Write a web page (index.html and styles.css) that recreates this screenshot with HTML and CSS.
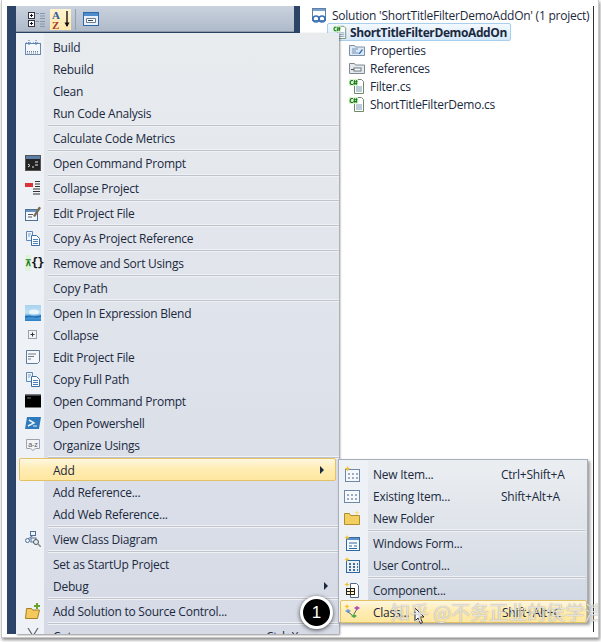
FILE: index.html
```html
<!DOCTYPE html>
<html lang="en">
<head>
<meta charset="utf-8">
<title>Solution context menu</title>
<link rel="stylesheet" href="styles.css">
</head>
<body>
<svg class="defs" width="0" height="0" aria-hidden="true">
  <symbol id="cs" viewBox="0 0 16 16">
    <path d="M5.500 1.500h7l2 2v12h-9z" fill="#fff" stroke="#6d8a6d"/>
    <path d="M7 9h6M7 11h6M7 13h6" stroke="#7c9ab8"/>
    <rect x="0" y="1" width="9" height="7" fill="#d9f5d0"/>
    <path d="M4 2.500H2.200L1.200 4v1.500l1 1H4" fill="none" stroke="#1c7a1c" stroke-width="1.200"/>
    <path d="M5.700 2l-.6 5M7.700 2l-.6 5M4.500 3.700h4M4.300 5.500h4" stroke="#1c7a1c"/>
  </symbol>
  <symbol id="copy" viewBox="0 0 16 16">
    <path d="M1.500 1.500h6v9h-6z" fill="#eef4fb" stroke="#5f87b4"/>
    <path d="M6.500 5.500h5l3 3v7h-8z" fill="#fff" stroke="#3d6ea8"/>
    <path d="M8 9.500h5M8 11.500h5M8 13.500h5" stroke="#4a7fbb"/>
    <path d="M3 4h3M3 6h2" stroke="#7d9fc6"/>
  </symbol>
  <symbol id="cmd" viewBox="0 0 16 16">
    <rect x=".5" y=".5" width="15" height="15" fill="#222" stroke="#555"/>
    <rect x="1" y="1" width="14" height="3" fill="#5b7fa8"/>
    <path d="M3 9l2 1.500L3 12M7 12h2M10 7h3M10 10h3" stroke="#e8e8e8" fill="none"/>
  </symbol>
  <symbol id="new" viewBox="0 0 16 16">
    <rect x="1.500" y="3.500" width="14" height="12" fill="#f5f8fc" stroke="#6f88a8"/>
    <path d="M4 8h2M8 8h2M12 8h2M4 12h2M8 12h2M12 12h2" stroke="#4b6079"/>
    <path d="M3.500 0l1 2 2 .5-2 1-1 2-1-2-2-1 2-.5z" fill="#f2c230"/>
  </symbol>
</svg>
<div class="window">
  <div class="panes">
    <div class="left-pane">
      <div class="toolbar">
        <span class="tool">
          <svg width="18" height="16" viewBox="0 0 18 16"><rect x=".5" y="1.500" width="6" height="6" fill="#fff" stroke="#334"/><path d="M2 4.500h3M3.500 3v3" stroke="#112"/><rect x=".5" y="9.500" width="6" height="6" fill="#fff" stroke="#334"/><path d="M2 12.500h3M3.500 11v3" stroke="#112"/><path d="M8 2.500h3M12 2.500h5M12 5h5M12 7.500h5M8 10.500h3M12 10.500h5M12 13h5M12 15.500h5" stroke="#8896a8"/></svg>
        </span>
        <span class="tool tool-on">
          <svg width="16" height="18" viewBox="0 0 16 18"><path d="M12 1v15" stroke="#111" stroke-width="1.400"/><path d="M9.500 12.500L12 17l2.500-4.500z" fill="#111"/></svg>
          <span class="az"><span class="az-a">A</span><br><span class="az-z">Z</span></span>
        </span>
        <span class="tool-sep"></span>
        <span class="tool">
          <svg width="16" height="16" viewBox="0 0 16 16"><rect x=".5" y="1.500" width="15" height="13" fill="#e8f1fb" stroke="#2f69a8"/><rect x="1" y="2" width="14" height="3" fill="#4f8ccb"/><path d="M3.500 7.500h9v4h-9z" fill="#fff" stroke="#6b7d92"/><path d="M5 9.500h5" stroke="#345"/></svg>
        </span>
      </div>
    </div>
    <div class="explorer">
      <div class="tree-row">
        <svg class="tree-icon" width="17" height="17" viewBox="0 0 17 17"><rect x="1.500" y="1.500" width="13" height="12" fill="#fff" stroke="#5d7fa8"/><rect x="2" y="2" width="12" height="2" fill="#7aa1cb"/><circle cx="5" cy="12" r="3" fill="none" stroke="#3a6fb5" stroke-width="1.600"/><circle cx="11" cy="12" r="3" fill="none" stroke="#3a6fb5" stroke-width="1.600"/></svg>
        <span>Solution 'ShortTitleFilterDemoAddOn' (1 project)</span>
      </div>
      <div class="tree-row tree-project">
        <span class="twist"></span>
        <span class="project-box">
          <svg width="14" height="14"><use href="#cs"/></svg>
          <span class="project-name">ShortTitleFilterDemoAddOn</span>
        </span>
      </div>
      <div class="tree-children">
        <div class="tree-child">
          <svg width="16" height="16" viewBox="0 0 16 16"><path d="M.5 3.500h5l1 1.500h9v8.500H.5z" fill="#dfe9f5" stroke="#7a8ea6"/><path d="M3 7h6M3 9h4M3 11h6" stroke="#6f8fb5"/><path d="M9 12l4-5 1 1-3 4z" fill="#3a78c0"/></svg>
          <span>Properties</span>
        </div>
        <div class="tree-child">
          <svg width="16" height="16" viewBox="0 0 16 16"><path d="M.5 3.500h5l1 1.500h9v8.500H.5z" fill="#e5e8ec" stroke="#7e8894"/><rect x="5" y="8" width="7" height="3" fill="#fff" stroke="#6b7682"/><path d="M2 9.500h3" stroke="#4b5763"/></svg>
          <span>References</span>
        </div>
        <div class="tree-child"><svg width="16" height="16"><use href="#cs"/></svg><span>Filter.cs</span></div>
        <div class="tree-child"><svg width="16" height="16"><use href="#cs"/></svg><span>ShortTitleFilterDemo.cs</span></div>
      </div>
    </div>
  </div>

  <div class="menu main-menu">
    <div class="item"><svg class="ico" width="16" height="16" viewBox="0 0 16 16"><rect x=".5" y="4.500" width="15" height="11" fill="#f3f6fa" stroke="#6b89ad"/><path d="M2 12.500h12M2 14h12" stroke="#66809c" stroke-dasharray="1 1"/><path d="M4 1v6M1 4h6M11 1v6M8 4h6" stroke="#3f77b6" stroke-dasharray="1 1"/></svg><span>Build</span></div>
    <div class="item"><span>Rebuild</span></div>
    <div class="item"><span>Clean</span></div>
    <div class="item"><span>Run Code Analysis</span></div>
    <div class="sep"></div>
    <div class="item"><span>Calculate Code Metrics</span></div>
    <div class="sep"></div>
    <div class="item"><svg class="ico" width="16" height="16"><use href="#cmd"/></svg><span>Open Command Prompt</span></div>
    <div class="sep"></div>
    <div class="item"><svg class="ico" width="16" height="16" viewBox="0 0 16 16"><rect x="0" y="3" width="8" height="4" fill="#d9343a"/><path d="M10 1.500h5M10 4h5M10 6.500h5M8 9h7M8 11.500h7M8 14h7" stroke="#333"/></svg><span>Collapse Project</span></div>
    <div class="sep"></div>
    <div class="item"><svg class="ico" width="16" height="16" viewBox="0 0 16 16"><rect x=".5" y="4.500" width="12" height="11" fill="#f4f7fb" stroke="#4d7099"/><rect x="1" y="5" width="11" height="2" fill="#6d94c0"/><path d="M3 9.500h5M3 12h4" stroke="#556"/><path d="M8 11L14 1.500l2 1.500-6 9z" fill="#7a6a50"/></svg><span>Edit Project File</span></div>
    <div class="sep"></div>
    <div class="item"><svg class="ico" width="16" height="16"><use href="#copy"/></svg><span>Copy As Project Reference</span></div>
    <div class="sep"></div>
    <div class="item"><span class="ico braces"><b class="sort">⊼</b><b>{}</b></span><span>Remove and Sort Usings</span></div>
    <div class="sep"></div>
    <div class="item"><span>Copy Path</span></div>
    <div class="sep"></div>
    <div class="item"><svg class="ico" width="16" height="16" viewBox="0 0 16 16"><defs><linearGradient id="blend" x1="0" y1="0" x2="0" y2="1"><stop offset="0" stop-color="#a9d2ee"/><stop offset=".5" stop-color="#bfe2f4"/><stop offset=".7" stop-color="#5fa6dc"/><stop offset="1" stop-color="#2a7fc6"/></linearGradient></defs><rect width="16" height="16" fill="url(#blend)"/><ellipse cx="9" cy="7" rx="5" ry="2.500" fill="#eaf6fc"/><path d="M0 11c5-2 8 2 16-1v2c-6 2-10-1-16 1z" fill="#1f6fb8"/></svg><span>Open In Expression Blend</span></div>
    <div class="item"><svg class="ico" width="16" height="16" viewBox="0 0 16 16"><rect x="3.500" y="3.500" width="8" height="8" fill="#f2f4f7" stroke="#98a2ae"/><path d="M5.500 7.500h4M7.500 5.500v4" stroke="#333"/></svg><span>Collapse</span></div>
    <div class="item"><svg class="ico" width="16" height="16" viewBox="0 0 16 16"><path d="M1.500 1.500h13v11l-2 2h-11z" fill="#f5f7fa" stroke="#5f7c9e"/><path d="M3 5h8M3 7.500h6M3 10h3" stroke="#6a7b8e"/></svg><span>Edit Project File</span></div>
    <div class="item"><svg class="ico" width="16" height="16"><use href="#copy"/></svg><span>Copy Full Path</span></div>
    <div class="item"><svg class="ico" width="16" height="16" viewBox="0 0 16 16"><rect width="16" height="13" y="1.500" fill="#000"/><rect y="1.500" width="16" height="1" fill="#778"/><path d="M2 5h4" stroke="#777"/></svg><span>Open Command Prompt</span></div>
    <div class="item"><svg class="ico" width="16" height="16" viewBox="0 0 16 16"><path d="M2 2h14l-2 12H0z" fill="#2f79bd"/><path d="M4 5l5 3-6 3" fill="none" stroke="#e8f2fb" stroke-width="1.500"/><path d="M8 11h4" stroke="#e8f2fb"/></svg><span>Open Powershell</span></div>
    <div class="item"><svg class="ico" width="16" height="16" viewBox="0 0 16 16"><path d="M1.500 2.500h13v9h-4l-2.500 2-2.500-2h-4z" fill="#f2f4f7" stroke="#9aa4b0"/><text x="8" y="9.500" class="az-mini">a-z</text></svg><span>Organize Usings</span></div>
    <div class="sep"></div>
    <div class="item item-on"><span>Add</span><i class="arrow"></i></div>
    <div class="item"><span>Add Reference...</span></div>
    <div class="item"><span>Add Web Reference...</span></div>
    <div class="sep"></div>
    <div class="item"><svg class="ico" width="16" height="16" viewBox="0 0 16 16"><rect x="5.500" y=".5" width="5" height="4" fill="#eef3f8" stroke="#4e6f96"/><circle cx="2.500" cy="9.500" r="2" fill="#eef3f8" stroke="#4e6f96"/><rect x="6" y="7" width="5" height="4" fill="#eef3f8" stroke="#4e6f96"/><path d="M8 4.500L3 8" stroke="#4e6f96"/><circle cx="11" cy="11" r="2.500" fill="#dcebf7" stroke="#555"/><path d="M13 13l3 3" stroke="#888" stroke-width="1.500"/></svg><span>View Class Diagram</span></div>
    <div class="sep"></div>
    <div class="item"><span>Set as StartUp Project</span></div>
    <div class="item"><span>Debug</span><i class="arrow"></i></div>
    <div class="sep"></div>
    <div class="item"><svg class="ico" width="16" height="16" viewBox="0 0 16 16"><path d="M.5 15.500l1-10h5l1 1.500h7l-2 8.500z" fill="#f3c95c" stroke="#a67f25"/><path d="M12 0v6M9 3h6" stroke="#6aa42b" stroke-width="2"/></svg><span>Add Solution to Source Control...</span></div>
    <div class="sep"></div>
    <div class="item"><svg class="ico" width="16" height="16" viewBox="0 0 16 16"><path d="M3 0l5 8 5-8M5 16l3-8 3 8" fill="none" stroke="#667" stroke-width="1.200"/></svg><span>Cut</span><span class="keys">Ctrl+X</span></div>
  </div>

  <div class="menu sub-menu">
    <div class="item"><svg class="ico" width="16" height="16"><use href="#new"/></svg><span>New Item...</span><span class="keys">Ctrl+Shift+A</span></div>
    <div class="item"><svg class="ico" width="16" height="16" viewBox="0 0 16 16"><rect x=".5" y="2.500" width="15" height="12" fill="#f5f8fc" stroke="#6f88a8"/><path d="M3 7h2M7 7h2M11 7h2M3 11h2M7 11h2M11 11h2" stroke="#4b6079"/></svg><span>Existing Item...</span><span class="keys">Shift+Alt+A</span></div>
    <div class="item"><svg class="ico" width="16" height="16" viewBox="0 0 16 16"><path d="M.5 3.500h5l1 2h9v9H.5z" fill="#f3cf62" stroke="#b08d2f"/><path d="M13 0l.7 2 2 .5-2 1-.7 2-.7-2-2-1 2-.5z" fill="#f7e27c"/></svg><span>New Folder</span></div>
    <div class="sep"></div>
    <div class="item"><svg class="ico" width="16" height="16" viewBox="0 0 16 16"><rect x="2.500" y="2.500" width="13" height="13" fill="#f5f8fc" stroke="#31689f"/><rect x="3" y="3" width="12" height="2" fill="#5b90c7"/><path d="M5 8h8M5 11h3M10 11h3M5 13.500h8" stroke="#31689f"/><path d="M3 0l.8 1.800 2 .5-2 .9-.8 1.900-.8-1.900-2-.9 2-.5z" fill="#f2c230"/></svg><span>Windows Form...</span></div>
    <div class="item"><svg class="ico" width="16" height="16" viewBox="0 0 16 16"><rect x="2.500" y="3.500" width="13" height="12" fill="#e9f0f8" stroke="#31689f"/><path d="M5 7h2M9 7h2M13 7h1M5 10h2M9 10h2M13 10h1M5 13h2M9 13h2M13 13h1" stroke="#17406e" stroke-width="1.500"/><path d="M3 0l.8 1.800 2 .5-2 .9-.8 1.900-.8-1.900-2-.9 2-.5z" fill="#f2c230"/></svg><span>User Control...</span></div>
    <div class="sep"></div>
    <div class="item"><svg class="ico" width="16" height="16" viewBox="0 0 16 16"><path d="M6.500 1.500h6l2 2v12h-8z" fill="#fff" stroke="#4d6a8c"/><rect x="2.500" y="6.500" width="8" height="6" fill="#fff5c8" stroke="#222"/><path d="M6.500 6.500v6M2.500 9.500h8" stroke="#222"/><path d="M3 0l.8 1.800 2 .5-2 .9-.8 1.900-.8-1.900-2-.9 2-.5z" fill="#f2c230"/></svg><span>Component...</span></div>
    <div class="item item-on"><svg class="ico" width="16" height="16" viewBox="0 0 16 16"><path d="M3 0l.8 1.800 2 .5-2 .9-.8 1.900-.8-1.900-2-.9 2-.5z" fill="#f2c230"/><path d="M1 7l3-2 3 2-3 2z" fill="#6f9fd0"/><path d="M10 4l3-2 3 2-3 2z" fill="#b24fb8"/><path d="M7 12l3-2 3 2-3 2z" fill="#4fa84f"/><path d="M4 8l4 3M13 5l-3 5" stroke="#567"/></svg><span>Class...</span><span class="keys">Shift+Alt+C</span></div>
  </div>

  <div class="badge">1</div>
  <svg class="cursor" width="12" height="18" viewBox="0 0 12 18"><path d="M1 1v13l3-3 2.500 5.500 2-1L6 10h4z" fill="#fff" stroke="#222"/></svg>
  <div class="watermark">知乎 @不务正业的侯学浩</div>
</div>
</body>
</html>
```
FILE: styles.css
```css
* { box-sizing: border-box; }
html, body { margin: 0; padding: 0; }
body { width: 601px; height: 642px; overflow: hidden; background: #fff; font-family: "Open Sans", "Noto Sans", sans-serif; font-size: 12px; letter-spacing: -.24px; color: #1b293e; }
.defs { display: block; height: 0; }
.window { position: relative; width: 598px; height: 638px; margin-left: 1px; overflow: hidden; background: #fff; padding: 6px 4px 3px 5px; border: 1px solid #c8c8c8; border-top: 0; box-shadow: 1px 2px 3px rgba(0,0,0,.45); }
.panes { display: flex; height: 100%; }

.left-pane { width: 293px; flex: none; background: #2c4468; padding: 0 6px 0 9px; }
.toolbar { display: flex; align-items: center; gap: 3px; height: 26px; padding: 0 0 0 10px; background: linear-gradient(#c9d2de, #aeb9c9); box-shadow: inset 0 -1px 0 #8d99a9; }
.tool { position: relative; display: flex; align-items: center; justify-content: center; width: 21px; height: 21px; }
.tool-on { background: linear-gradient(#fff3cf, #ffe9ab); }
.tool-on svg { margin-left: 4px; }
.az { position: absolute; left: 2px; top: 1px; font: bold 11px/10px "Liberation Serif", serif; letter-spacing: 0; }
.az-a { color: #2d5aa0; }
.az-z { color: #a83a30; }
.tool-sep { width: 1px; height: 21px; margin: 0 1px; background: #94a1b3; }

.explorer { flex: 1; border-right: 1px solid #333; height: 626px; padding: 0 0 0 11px; font-size: 12px; }
.tree-row { display: flex; align-items: center; gap: 4px; height: 18px; white-space: nowrap; }
.tree-project { gap: 0; height: 18px; margin-top: -1px; }
.twist { width: 0; height: 0; margin: 0 10px 0 0; border-left: 3px solid transparent; border-right: 3px solid transparent; border-bottom: 4px solid #444; align-self: flex-end; }
.project-box { display: flex; align-items: center; gap: 3px; height: 18px; padding: 0 3px 0 5px; border: 1px solid #a9cfee; border-radius: 2px; background: linear-gradient(#f3f9fe, #d6e9f9); }
.project-name { font-weight: 700; letter-spacing: -.4px; }
.tree-children { padding: 0 0 0 38px; }
.tree-child { display: flex; align-items: center; gap: 5px; height: 18px; white-space: nowrap; }

.menu { position: absolute; color: #1b293e; }
.main-menu { left: 14px; top: 33px; width: 323px; height: 601px; overflow: hidden; padding-top: 3px; background: linear-gradient(90deg, #eef2f6 0, #eef2f6 28px, rgba(238,242,246,0) 28px), linear-gradient(#e9ecef, #d5dae6); box-shadow: 1px 1px 2px rgba(0,0,0,.45); }
.sub-menu { left: 336px; top: 459px; width: 250px; height: 164px; padding-top: 3px; border: 1px solid #a7afbb; background: linear-gradient(90deg, #eef2f6 0, #eef2f6 29px, rgba(238,242,246,0) 29px), linear-gradient(#ebeef1, #cfd6e2); box-shadow: 2px 2px 3px rgba(0,0,0,.4); }
.item { position: relative; display: flex; align-items: center; height: 22px; padding-left: 37px; white-space: nowrap; }
.sub-menu .item { padding-left: 34px; }
.ico { position: absolute; left: 9px; top: 3px; }
.sub-menu .ico { left: 5px; }
.sep { height: 3px; margin-left: 32px; border-top: 1px solid transparent; background: linear-gradient(#bfc4cc 1px, #eff1f5 1px, #eff1f5 2px, transparent 2px); }
.sub-menu .sep { margin-left: 29px; margin-right: 2px; }
.item-on { margin: -1px 3px 0 3px; padding-left: 33px; padding-top: 1px; height: 23px; border: 1px solid #e3c266; border-radius: 2px; background: linear-gradient(#fff8e2, #ffedb5 45%, #fee79f); }
.sub-menu .item-on { margin: -1px 0 0 1px; padding-left: 32px; }
.sub-menu .item-on .ico { left: 3px; }
.arrow { position: absolute; right: 8px; top: 7px; width: 0; height: 0; border-top: 4px solid transparent; border-bottom: 4px solid transparent; border-left: 4px solid #1b293e; }
.main-menu > .item > .arrow { right: 11px; }
.keys { position: absolute; left: 162px; }
.sub-menu .item-on .keys { left: 161px; }
.main-menu .keys { left: 250px; }
.braces { display: flex; align-items: center; font: bold 12px/16px "DejaVu Sans Mono", monospace; color: #111; letter-spacing: -1px; }
.sort { font-size: 9px; color: #1a7a1a; background: #dff3da; }
.az-mini { font: 7px "Liberation Sans", sans-serif; text-anchor: middle; fill: #555; letter-spacing: 0; }

.badge { position: absolute; left: 298px; top: 596px; width: 33px; height: 33px; border: 3px solid #fff; border-radius: 50%; background: #000; color: #fff; font: 400 17px/27px "Liberation Sans", sans-serif; letter-spacing: 0; text-align: center; box-shadow: 0 1px 4px rgba(0,0,0,.7); }
.cursor { position: absolute; left: 412px; top: 607px; }
.watermark { position: absolute; left: 389px; top: 598px; font: 400 19px/28px "Noto Sans CJK SC", sans-serif; color: rgba(255,255,255,.75); white-space: nowrap; text-shadow: 0 0 1px rgba(60,60,60,.6); letter-spacing: 0; }
```
